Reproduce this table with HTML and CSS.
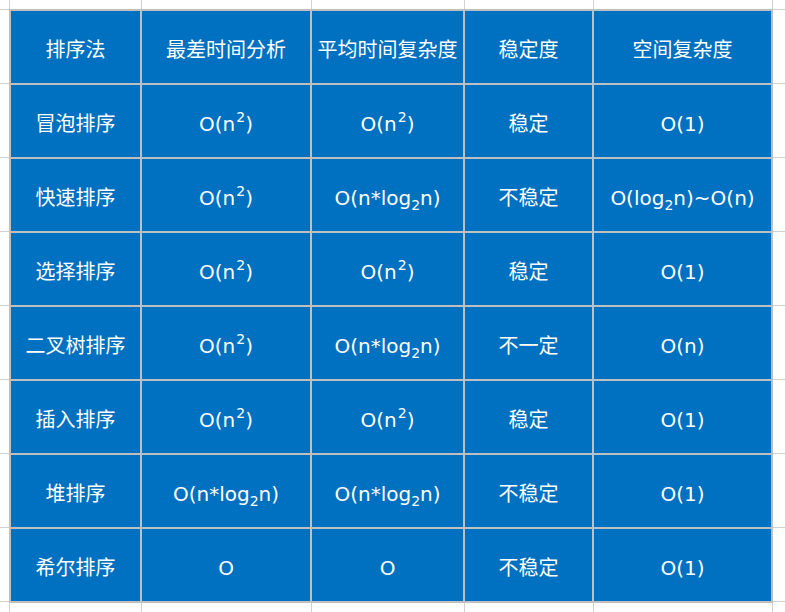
FILE: index.html
```html
<!DOCTYPE html>
<html lang="zh-CN">
<head>
<meta charset="utf-8">
<title>排序算法复杂度</title>
<link rel="stylesheet" href="styles.css">
</head>
<body>
<div class="sheet">
  <div class="cell"><span>排序法</span></div>
  <div class="cell"><span>最差时间分析</span></div>
  <div class="cell"><span>平均时间复杂度</span></div>
  <div class="cell"><span>稳定度</span></div>
  <div class="cell"><span>空间复杂度</span></div>

  <div class="cell"><span>冒泡排序</span></div>
  <div class="cell"><span>O(n<span class="sup">2</span>)</span></div>
  <div class="cell"><span>O(n<span class="sup">2</span>)</span></div>
  <div class="cell"><span>稳定</span></div>
  <div class="cell"><span>O(1)</span></div>

  <div class="cell"><span>快速排序</span></div>
  <div class="cell"><span>O(n<span class="sup">2</span>)</span></div>
  <div class="cell"><span>O(n*log<span class="sub">2</span>n)</span></div>
  <div class="cell"><span>不稳定</span></div>
  <div class="cell"><span>O(log<span class="sub">2</span>n)~O(n)</span></div>

  <div class="cell"><span>选择排序</span></div>
  <div class="cell"><span>O(n<span class="sup">2</span>)</span></div>
  <div class="cell"><span>O(n<span class="sup">2</span>)</span></div>
  <div class="cell"><span>稳定</span></div>
  <div class="cell"><span>O(1)</span></div>

  <div class="cell"><span>二叉树排序</span></div>
  <div class="cell"><span>O(n<span class="sup">2</span>)</span></div>
  <div class="cell"><span>O(n*log<span class="sub">2</span>n)</span></div>
  <div class="cell"><span>不一定</span></div>
  <div class="cell"><span>O(n)</span></div>

  <div class="cell"><span>插入排序</span></div>
  <div class="cell"><span>O(n<span class="sup">2</span>)</span></div>
  <div class="cell"><span>O(n<span class="sup">2</span>)</span></div>
  <div class="cell"><span>稳定</span></div>
  <div class="cell"><span>O(1)</span></div>

  <div class="cell"><span>堆排序</span></div>
  <div class="cell"><span>O(n*log<span class="sub">2</span>n)</span></div>
  <div class="cell"><span>O(n*log<span class="sub">2</span>n)</span></div>
  <div class="cell"><span>不稳定</span></div>
  <div class="cell"><span>O(1)</span></div>

  <div class="cell"><span>希尔排序</span></div>
  <div class="cell"><span>O</span></div>
  <div class="cell"><span>O</span></div>
  <div class="cell"><span>不稳定</span></div>
  <div class="cell"><span>O(1)</span></div>
</div>
</body>
</html>
```

FILE: styles.css
```css
html, body {
  margin: 0;
  padding: 0;
}

body {
  width: 785px;
  height: 612px;
  overflow: hidden;
  background-color: #ffffff;
  background-image:
    repeating-linear-gradient(to bottom,
      transparent 0 9px, #d0d0d0 9px 10px, transparent 10px 74px),
    linear-gradient(to right,
      transparent 0 9px, #d0d0d0 9px 10px,
      transparent 10px 141px, #d0d0d0 141px 142px,
      transparent 142px 311px, #d0d0d0 311px 312px,
      transparent 312px 464px, #d0d0d0 464px 465px,
      transparent 465px 593px, #d0d0d0 593px 594px,
      transparent 594px 772px, #d0d0d0 772px 773px,
      transparent 773px);
  font-family: "DejaVu Sans", "Noto Sans CJK SC", sans-serif;
  font-size: 20px;
  color: #ffffff;
}

.sheet {
  display: grid;
  grid-template-columns: 129px 168px 151px 127px 177px;
  grid-auto-rows: 72px;
  gap: 2px;
  padding: 2px;
  margin: 9px 0 0 9px;
  width: max-content;
  background: #bfbfbf;
}

.cell {
  background: #0070c0;
  display: flex;
  align-items: center;
  justify-content: center;
  padding-top: 5px;
  box-sizing: border-box;
  white-space: nowrap;
  line-height: 24px;
}

.sup,
.sub {
  display: inline-block;
  font-size: 14px;
  line-height: 14px;
}

.sup {
  transform: translateY(-9px);
  margin-left: 1px;
}

.sub {
  transform: translateY(5px);
}
```
